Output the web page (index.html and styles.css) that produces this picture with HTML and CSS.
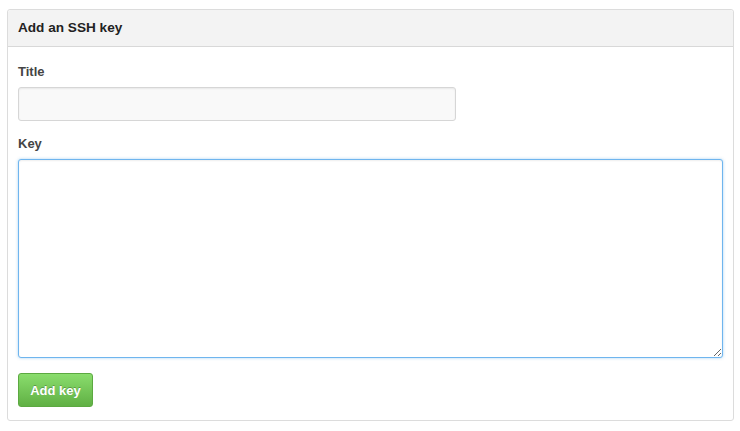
FILE: index.html
```html
<!DOCTYPE html>
<html lang="en">
<head>
  <meta charset="UTF-8">
  <title>Add an SSH key</title>
  <link rel="stylesheet" href="styles.css">
</head>
<body>

  <div class="boxed-group">
    <h3 class="boxed-group-title">Add an SSH key</h3>
    <form class="boxed-group-inner">
      <label for="ssh-title">Title</label>
      <input type="text" id="ssh-title" class="title-input">
      <label for="ssh-key" class="key-label">Key</label>
      <textarea id="ssh-key" class="key-input"></textarea>
      <button type="submit" class="btn-primary">Add key</button>
    </form>
  </div>

</body>
</html>
```

FILE: styles.css
```css
body {
  font-family: "Liberation Sans", Helvetica, Arial, sans-serif;
  font-size: 13px;
  color: #333;
  margin: 0;
  padding: 9px 6px 0 7px;
  background: #fff;
}

.boxed-group {
  border: 1px solid #dcdcdc;
  border-radius: 3px;
  background: #fff;
}

.boxed-group-title {
  margin: 0;
  height: 36px;
  line-height: 36px;
  padding: 0 10px;
  font-size: 13.6px;
  font-weight: bold;
  color: #222;
  background: #f3f3f3;
  border-bottom: 1px solid #d8d8d8;
  border-radius: 3px 3px 0 0;
}

.boxed-group-inner {
  display: flex;
  flex-direction: column;
  align-items: flex-start;
  padding: 16px 10px 13px;
}

label {
  font-weight: bold;
  line-height: 18px;
  color: #444;
  margin-bottom: 6px;
}

.key-label {
  margin-top: 14px;
  margin-bottom: 6px;
}

.title-input {
  width: 438px;
  height: 34px;
  box-sizing: border-box;
  border: 1px solid #d6d6d6;
  border-radius: 3px;
  background: #f9f9f9;
  box-shadow: inset 0 1px 2px rgba(0, 0, 0, 0.07);
  font-size: 13px;
  padding: 7px 8px;
}

.key-input {
  width: 100%;
  height: 199px;
  box-sizing: border-box;
  border: 1px solid #6fb5ee;
  border-radius: 3px;
  background: #fff;
  box-shadow: inset 0 1px 2px rgba(0, 0, 0, 0.07), 0 0 3px rgba(81, 167, 232, 0.5);
  font-family: inherit;
  font-size: 13px;
  padding: 7px 8px;
  outline: none;
  resize: vertical;
}

.btn-primary {
  margin-top: 15px;
  height: 34px;
  width: 75px;
  padding: 0;
  font-family: inherit;
  font-size: 13px;
  font-weight: bold;
  color: #fff;
  text-shadow: 0 -1px 0 rgba(0, 0, 0, 0.25);
  background: linear-gradient(#8add6d, #60b044);
  border: 1px solid #5ca941;
  border-radius: 3px;
  cursor: pointer;
}
```
